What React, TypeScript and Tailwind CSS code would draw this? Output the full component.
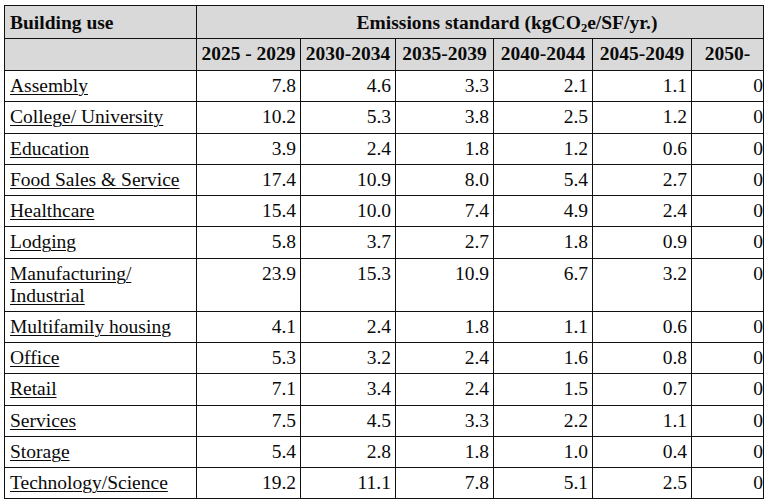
import React from 'react';

type Row = { use: string; values: string[] };

const PERIODS = ['2025 - 2029', '2030-2034', '2035-2039', '2040-2044', '2045-2049', '2050-'];

const ROWS: Row[] = [
  { use: 'Assembly', values: ['7.8', '4.6', '3.3', '2.1', '1.1', '0'] },
  { use: 'College/ University', values: ['10.2', '5.3', '3.8', '2.5', '1.2', '0'] },
  { use: 'Education', values: ['3.9', '2.4', '1.8', '1.2', '0.6', '0'] },
  { use: 'Food Sales & Service', values: ['17.4', '10.9', '8.0', '5.4', '2.7', '0'] },
  { use: 'Healthcare', values: ['15.4', '10.0', '7.4', '4.9', '2.4', '0'] },
  { use: 'Lodging', values: ['5.8', '3.7', '2.7', '1.8', '0.9', '0'] },
  { use: 'Manufacturing/ Industrial', values: ['23.9', '15.3', '10.9', '6.7', '3.2', '0'] },
  { use: 'Multifamily housing', values: ['4.1', '2.4', '1.8', '1.1', '0.6', '0'] },
  { use: 'Office', values: ['5.3', '3.2', '2.4', '1.6', '0.8', '0'] },
  { use: 'Retail', values: ['7.1', '3.4', '2.4', '1.5', '0.7', '0'] },
  { use: 'Services', values: ['7.5', '4.5', '3.3', '2.2', '1.1', '0'] },
  { use: 'Storage', values: ['5.4', '2.8', '1.8', '1.0', '0.4', '0'] },
  { use: 'Technology/Science', values: ['19.2', '11.1', '7.8', '5.1', '2.5', '0'] },
];

const cell = 'border border-[#111] align-top pt-[4px] pb-[4.25px] leading-[22px]';

export default function App() {
  return (
    <div className="w-[768px] h-[501px] bg-white overflow-hidden pt-[5px] pl-[4px] text-[#0a0a0a] font-['Liberation_Serif','Times_New_Roman',serif] text-[19.5px]">
      <table className="table-fixed border-collapse w-[759px]">
        <colgroup>
          <col className="w-[192px]" />
          <col className="w-[104px]" />
          <col className="w-[95px]" />
          <col className="w-[98px]" />
          <col className="w-[99px]" />
          <col className="w-[99px]" />
          <col className="w-[72px]" />
        </colgroup>
        <thead>
          <tr className="bg-[#d9d9d9]">
            <th className="border border-[#111] align-top pt-[6px] pb-[4px] pl-[5px] leading-[22px] text-left font-bold">
              Building use
            </th>
            <th
              colSpan={6}
              className="border border-[#111] align-top pt-[6px] pb-[4px] pl-[54px] leading-[22px] text-center font-bold whitespace-nowrap"
            >
              Emissions standard (kgCO<sub className="text-[65%]">2</sub>e/SF/yr.)
            </th>
          </tr>
          <tr className="bg-[#d9d9d9]">
            <th className={`${cell} pb-[5px]`}></th>
            {PERIODS.map((p) => (
              <th key={p} className={`${cell} pb-[5px] text-center font-bold whitespace-nowrap px-0`}>
                {p}
              </th>
            ))}
          </tr>
        </thead>
        <tbody>
          {ROWS.map((row) => (
            <tr key={row.use}>
              <td className={`${cell} pl-[5px] pr-[4px]`}>
                <span className="underline decoration-1 underline-offset-2">{row.use}</span>
              </td>
              {row.values.map((v, i) => (
                <td
                  key={i}
                  className={`${cell} text-right ${i === row.values.length - 1 ? 'pr-0' : 'pr-[4px]'}`}
                >
                  {v}
                </td>
              ))}
            </tr>
          ))}
        </tbody>
      </table>
    </div>
  );
}
